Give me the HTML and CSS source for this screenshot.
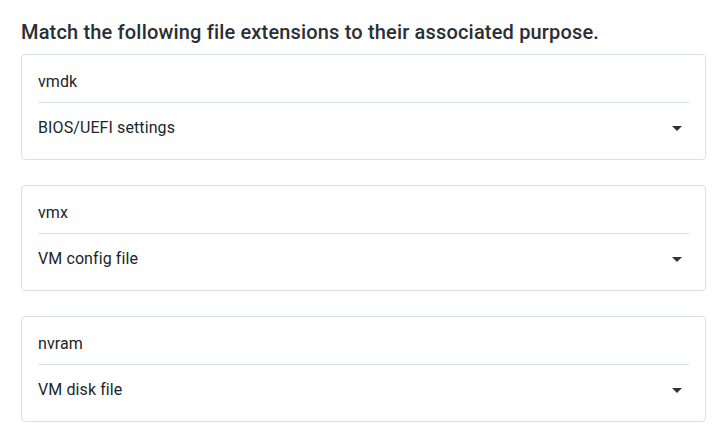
FILE: index.html
```html
<!DOCTYPE html>
<html lang="en">
<head>
  <meta charset="UTF-8" />
  <meta name="viewport" content="width=device-width, initial-scale=1.0"/>
  <title>Match file extensions</title>
  <link rel="stylesheet" href="styles.css">
</head>
<body>
  <div class="question">
    <h2 class="prompt">Match the following file extensions to their associated purpose.</h2>

    <div class="match-card">
      <div class="match-term">vmdk</div>
      <div class="match-select">
        <span class="match-value">BIOS/UEFI settings</span>
        <span class="arrow"></span>
      </div>
    </div>

    <div class="match-card">
      <div class="match-term">vmx</div>
      <div class="match-select">
        <span class="match-value">VM config file</span>
        <span class="arrow"></span>
      </div>
    </div>

    <div class="match-card">
      <div class="match-term">nvram</div>
      <div class="match-select">
        <span class="match-value">VM disk file</span>
        <span class="arrow"></span>
      </div>
    </div>
  </div>
</body>
</html>
```

FILE: styles.css
```css
body {
  margin: 0;
  background: #fff;
  font-family: Roboto, "Liberation Sans", sans-serif;
  color: #212529;
}
.question {
  padding: 0 21px;
}
.prompt {
  margin: 0;
  padding-top: 19px;
  font-size: 20px;
  font-weight: 500;
  letter-spacing: 0.17px;
  line-height: 27px;
  margin-bottom: 8px;
  color: #2b2f33;
}
.match-card {
  border: 1px solid #dadfe3;
  border-radius: 4px;
  padding: 15px 16px 19px;
  margin-bottom: 25px;
}
.match-term {
  font-size: 16px;
  line-height: 24px;
  letter-spacing: 0.1px;
  padding-bottom: 8px;
  border-bottom: 1px solid #dadfe3;
}
.match-select {
  display: flex;
  align-items: center;
  justify-content: space-between;
  margin-top: 13px;
  font-size: 16px;
  line-height: 24px;
  letter-spacing: 0.1px;
  padding-right: 7px;
}
.arrow {
  width: 0;
  height: 0;
  border-left: 5px solid transparent;
  border-right: 5px solid transparent;
  border-top: 5px solid #333;
}
```
